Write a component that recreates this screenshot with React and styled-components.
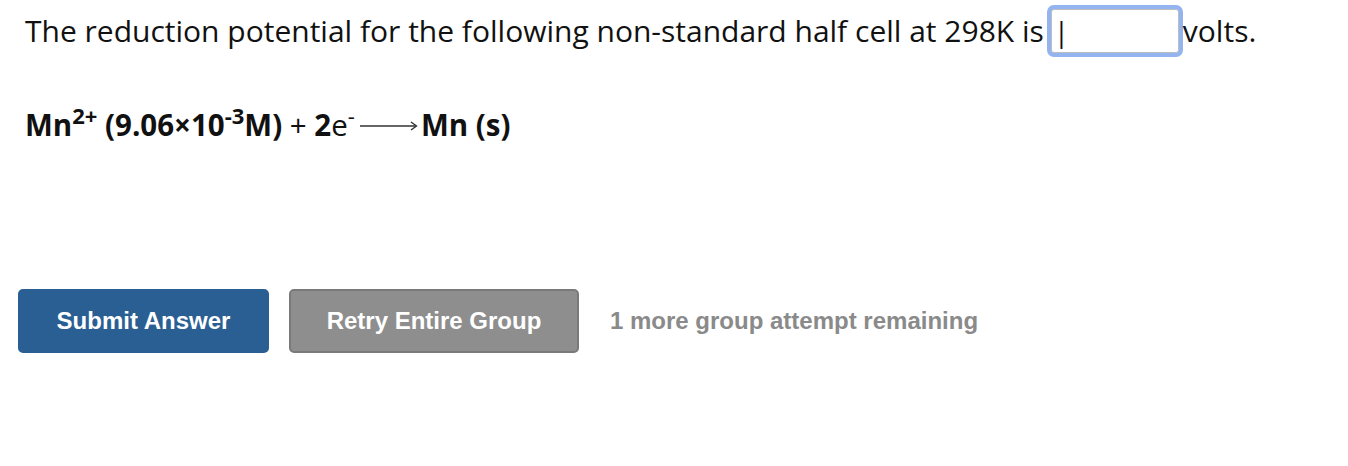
import React from 'react';
import styled, { createGlobalStyle } from 'styled-components';

const Global = createGlobalStyle`
  body {
    margin: 0;
    background: #fff;
    font-family: "Open Sans", "Noto Sans", sans-serif;
    color: #111;
  }
`;

const Page = styled.div`
  padding: 5px 25px 0 25px;
`;

const Question = styled.div`
  display: flex;
  align-items: center;
  font-size: 30px;
  line-height: 52px;
  white-space: nowrap;
`;

const Blank = styled.span`
  display: inline-flex;
  align-items: center;
  width: 128px;
  height: 44px;
  margin: 0 4px 0 7px;
  box-sizing: border-box;
  border: 1px solid #bdbdbd;
  border-radius: 3px;
  box-shadow: 0 0 0 4px #93b4f1;
  background: #fff;
  padding-left: 2px;
  font-size: 28px;
`;

const Equation = styled.div`
  margin-top: 48px;
  font-size: 29.5px;
  line-height: 40px;
  font-weight: 700;
  white-space: nowrap;
`;

const Sup = styled.sup`
  font-size: 22px;
  line-height: 0;
  vertical-align: 12px;
`;

const Light = styled.span`
  font-weight: 400;
`;

const Arrow = styled.svg`
  width: 58px;
  height: 12px;
  margin: 0 3px 0 5px;
  vertical-align: 4px;
`;

const Actions = styled.div`
  display: flex;
  align-items: center;
  margin: 144px 0 0 -7px;
  font-family: "Liberation Sans", Arial, sans-serif;
`;

const Button = styled.button`
  height: 64px;
  width: ${p => p.$w}px;
  border-radius: 5px;
  border: 2px solid ${p => p.$border};
  background: ${p => p.$bg};
  color: #fff;
  font-family: inherit;
  font-weight: 700;
  font-size: 24px;
  margin-right: 20px;
  cursor: pointer;
`;

const Remaining = styled.span`
  margin-left: 11px;
  color: #8a8a8a;
  font-weight: 700;
  font-size: 24px;
`;

export default function App() {
  return (
    <Page>
      <Global />
      <Question>
        The reduction potential for the following non-standard half cell at 298K is
        <Blank>|</Blank>
        volts.
      </Question>
      <Equation>
        Mn<Sup>2+</Sup> (9.06×10<Sup>-3</Sup>M) <Light>+</Light> 2<Light>e<Sup>-</Sup></Light>
        <Arrow viewBox="0 0 58 12">
          <line x1="0" y1="6" x2="56" y2="6" stroke="#333" strokeWidth="1.4" />
          <path d="M51 2 L56.5 6 L51 10" fill="none" stroke="#333" strokeWidth="1.4" />
        </Arrow>
        Mn (s)
      </Equation>
      <Actions>
        <Button $w={251} $bg="#2a5f93" $border="#2a5f93">Submit Answer</Button>
        <Button $w={290} $bg="#8e8e8e" $border="#7a7a7a">Retry Entire Group</Button>
        <Remaining>1 more group attempt remaining</Remaining>
      </Actions>
    </Page>
  );
}
